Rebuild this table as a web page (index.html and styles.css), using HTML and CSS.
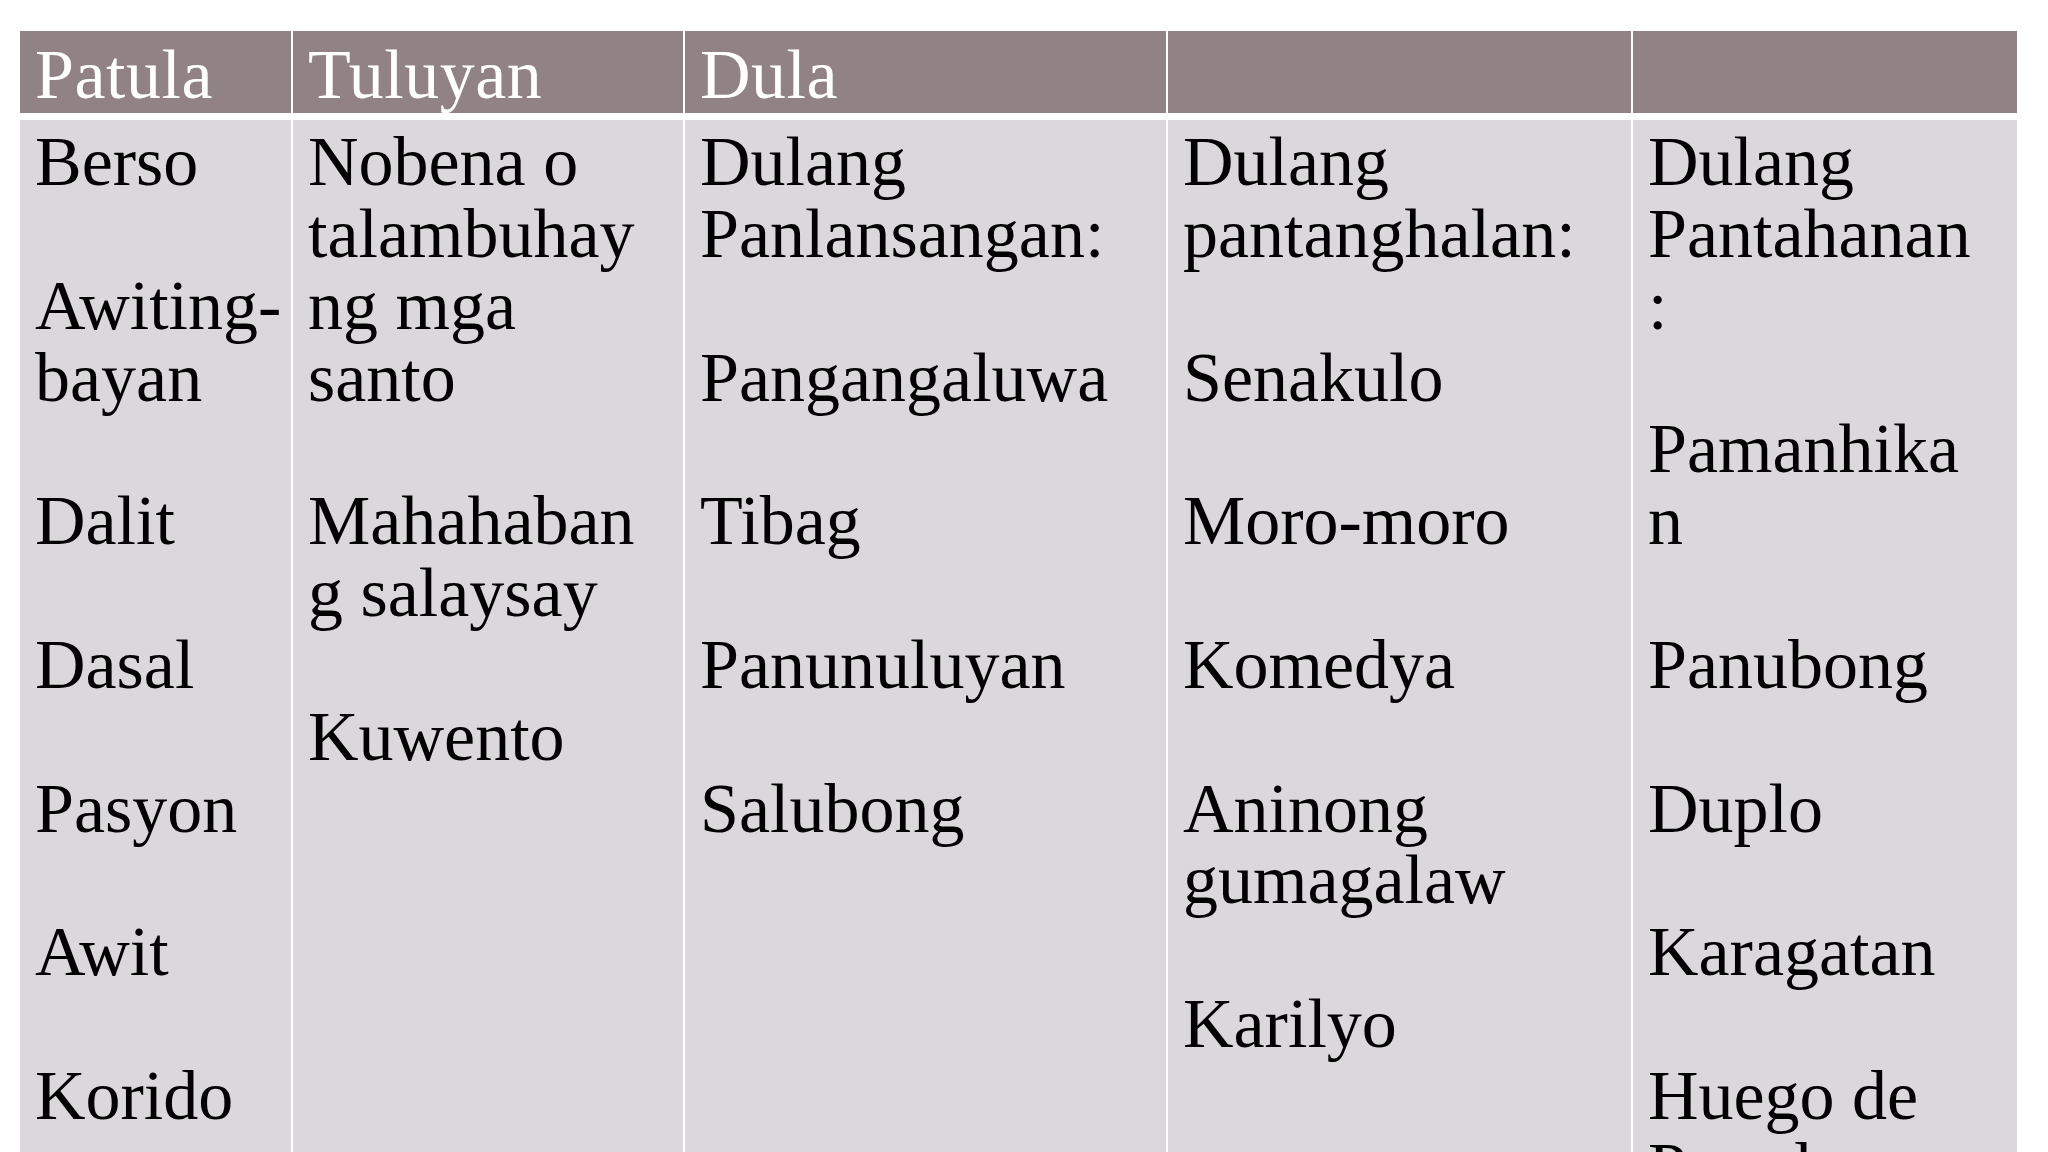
FILE: index.html
```html
<!DOCTYPE html>
<html lang="tl">
<head>
<meta charset="utf-8">
<title>Patula, Tuluyan, Dula</title>
<link rel="stylesheet" href="styles.css">
</head>
<body>
<div class="slide">
  <div class="table">
    <div class="th">Patula</div>
    <div class="th">Tuluyan</div>
    <div class="th">Dula</div>
    <div class="th"></div>
    <div class="th"></div>

    <div class="td">
      <p class="item">Berso</p>
      <p class="item">Awiting-<br>bayan</p>
      <p class="item">Dalit</p>
      <p class="item">Dasal</p>
      <p class="item">Pasyon</p>
      <p class="item">Awit</p>
      <p class="item">Korido</p>
    </div>
    <div class="td">
      <p class="item">Nobena o<br>talambuhay<br>ng mga<br>santo</p>
      <p class="item">Mahahaban<br>g salaysay</p>
      <p class="item">Kuwento</p>
    </div>
    <div class="td">
      <p class="item">Dulang<br>Panlansangan:</p>
      <p class="item">Pangangaluwa</p>
      <p class="item">Tibag</p>
      <p class="item">Panunuluyan</p>
      <p class="item">Salubong</p>
    </div>
    <div class="td">
      <p class="item">Dulang<br>pantanghalan:</p>
      <p class="item">Senakulo</p>
      <p class="item">Moro-moro</p>
      <p class="item">Komedya</p>
      <p class="item">Aninong<br>gumagalaw</p>
      <p class="item">Karilyo</p>
    </div>
    <div class="td">
      <p class="item">Dulang<br>Pantahanan<br>:</p>
      <p class="item">Pamanhika<br>n</p>
      <p class="item">Panubong</p>
      <p class="item">Duplo</p>
      <p class="item">Karagatan</p>
      <p class="item">Huego de<br>Prenda</p>
    </div>
  </div>
</div>
</body>
</html>
```

FILE: styles.css
```css
html, body {
  margin: 0;
  padding: 0;
  background: #ffffff;
}

body {
  width: 2048px;
  height: 1152px;
  overflow: hidden;
}

.slide {
  padding: 31px 31px 0 20px;
}

.table {
  display: grid;
  grid-template-columns: 271px 390px 481px 463px 384px;
  grid-template-rows: 82px 1200px;
  column-gap: 2px;
  row-gap: 7px;
  font-family: "Liberation Serif", "Times New Roman", serif;
  font-size: 70px;
}

.th {
  background: #918385;
  color: #ffffff;
  padding: 5px 0 0 15px;
  line-height: 77px;
  white-space: nowrap;
  letter-spacing: 0.5px;
}

.td {
  background: #dad8da;
  color: #000000;
  padding: 6px 0 0 15px;
  line-height: 71.85px;
}

.item {
  margin: 0 0 71.85px 0;
  white-space: nowrap;
}
```
